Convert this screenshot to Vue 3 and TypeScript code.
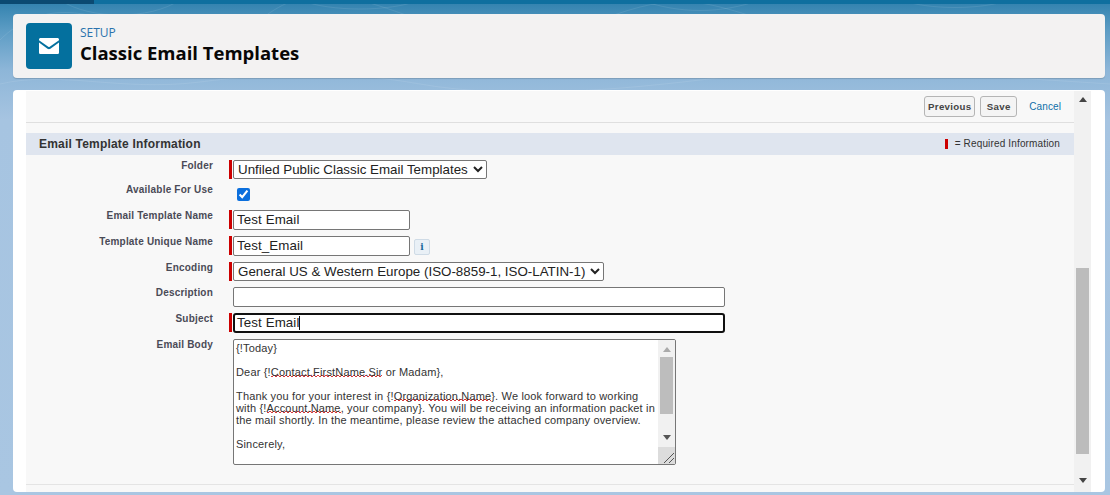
<script setup lang="ts">
const folder = 'Unfiled Public Classic Email Templates'
const encoding = 'General US & Western Europe (ISO-8859-1, ISO-LATIN-1)'
</script>

<template>
  <div class="page">
    <svg class="swirls" width="1110" height="90" viewBox="0 0 1110 90" fill="none" stroke="#ffffff" stroke-opacity=".09">
      <path d="M0 40C40 0 90 10 130 30S210 60 260 20 350-5 420 20 520 50 600 20 700 0 780 25 900 50 1000 15 1110 10" />
      <path d="M60 0C90 20 150 20 180 0M300 0C330 12 390 12 420 0M640 0C680 14 720 14 760 0M900 0C930 10 980 10 1010 0" />
      <path d="M0 84C60 70 120 92 200 82S340 70 420 84 600 92 700 80 900 70 1110 84" />
    </svg>
    <div class="topbar"><div class="topbar-dark"></div></div>

    <header class="head">
      <div class="tile">
        <svg width="20" height="16" viewBox="0 0 20 16">
          <path d="M0 2.2V1.6C0 .7.7 0 1.6 0h16.8C19.3 0 20 .7 20 1.6v.6l-9.3 6.6c-.4.3-1 .3-1.4 0z" fill="#fff" />
          <path d="M0 4.6v9.8c0 .9.7 1.6 1.6 1.6h16.8c.9 0 1.6-.7 1.6-1.6V4.6l-8.6 6.2c-.9.6-2 .6-2.9 0z" fill="#fff" />
        </svg>
      </div>
      <div class="titles">
        <div class="eyebrow">SETUP</div>
        <h1>Classic Email Templates</h1>
      </div>
    </header>

    <main class="card">
      <div class="panel">
        <div class="toolbar">
          <button class="btn prev">Previous</button>
          <button class="btn save">Save</button>
          <a class="cancel">Cancel</a>
        </div>

        <section class="section-head">
          <h2>Email Template Information</h2>
          <span class="legend"><i class="legend-bar"></i>= Required Information</span>
        </section>

        <form class="form" @submit.prevent>
          <div class="row r-folder">
            <label>Folder</label>
            <i class="req"></i>
            <select class="sel w-folder"><option>{{ folder }}</option></select>
          </div>
          <div class="row r-check">
            <label>Available For Use</label>
            <i class="noreq"></i>
            <input class="check" type="checkbox" checked />
          </div>
          <div class="row r-name">
            <label>Email Template Name</label>
            <i class="req"></i>
            <input class="txt w-name" value="Test Email" />
          </div>
          <div class="row r-unique">
            <label>Template Unique Name</label>
            <i class="req"></i>
            <input class="txt w-name" value="Test_Email" />
            <span class="info">i</span>
          </div>
          <div class="row r-enc">
            <label>Encoding</label>
            <i class="req"></i>
            <select class="sel w-enc"><option>{{ encoding }}</option></select>
          </div>
          <div class="row r-desc">
            <label>Description</label>
            <i class="noreq"></i>
            <input class="txt w-wide" />
          </div>
          <div class="row r-subj">
            <label>Subject</label>
            <i class="req"></i>
            <div class="txt w-wide focus">Test Email<span class="caret"></span></div>
          </div>
          <div class="row r-body">
            <label>Email Body</label>
            <i class="noreq"></i>
            <div class="body">
              <div class="body-text">
                <p>{!Today}</p>
                <p>Dear {!<u>Contact.FirstName.Sir</u> or Madam},</p>
                <p>Thank you for your interest in {!<u>Organization.Name</u>}. We look forward to working<br />with {!<u>Account.Name</u>, your company}. You will be receiving an information packet in<br />the mail shortly. In the meantime, please review the attached company overview.</p>
                <p>Sincerely,</p>
              </div>
              <div class="mini-bar">
                <span class="arrow up small"></span>
                <span class="mini-thumb"></span>
                <span class="arrow down small"></span>
                <span class="grip">
                  <svg width="14" height="14" viewBox="0 0 14 14" stroke="#555" fill="none"><path d="M3 13 13 3M8 13l5-5" /></svg>
                </span>
              </div>
            </div>
          </div>
        </form>
        <div class="panel-foot"></div>
      </div>

      <aside class="scroll">
        <span class="arrow up"></span>
        <span class="thumb"></span>
        <span class="arrow down"></span>
      </aside>
    </main>
  </div>
</template>

<style>
html, body { margin: 0; padding: 0; overflow: hidden; background: #a9c6e2; }
</style>

<style scoped>
.page {
  position: relative;
  width: 1110px;
  height: 495px;
  box-sizing: border-box;
  padding: 14px 5px 4px 13px;
  overflow: hidden;
  font-family: "Liberation Sans", Arial, sans-serif;
  background: linear-gradient(180deg, #2f80ad 0, #5c9cc4 30px, #8db6d8 70px, #a6c4e1 120px, #a9c6e2 100%);
}
.swirls { position: absolute; left: 0; top: 0; }
.topbar { position: absolute; left: 0; right: 0; top: 0; height: 4px; background: #0f6f9f; }
.topbar-dark { width: 94px; height: 4px; background: #0b4a72; }

.head {
  position: relative;
  display: flex;
  align-items: center;
  height: 64px;
  box-sizing: border-box;
  padding-left: 13px;
  gap: 8px;
  background: #f3f2f2;
  border-radius: 4px;
  box-shadow: 0 1px 1px rgba(0, 0, 0, .15);
}
.tile {
  width: 46px;
  height: 46px;
  border-radius: 4px;
  background: #04709e;
  display: flex;
  align-items: center;
  justify-content: center;
}
.titles { margin-top: -3px; }
.eyebrow { font: 12px/17px "Open Sans", sans-serif; color: #2a72ad; }
h1 { margin: 0; font: 700 18.5px/24px "Open Sans", sans-serif; color: #080707; }

.card {
  position: relative;
  display: flex;
  height: 401px;
  margin-top: 12px;
  padding: 1px 14px 0 13px;
  background: #fff;
  border-radius: 4px;
}
.panel { width: 1048px; background: #f8f8f8; flex: none; }
.toolbar {
  display: flex;
  align-items: center;
  justify-content: flex-end;
  height: 32px;
  padding: 0 13px 1px 0;
  box-sizing: border-box;
  border-bottom: 1px solid #dfdfdf;
  margin-bottom: 10px;
}
.btn {
  height: 21px;
  padding: 0;
  border: 1px solid #b5b5b5;
  border-radius: 3px;
  background: #f4f4f4;
  font: 700 9.7px "Liberation Sans", sans-serif;
  letter-spacing: .3px;
  color: #444;
}
.prev { width: 51px; }
.save { width: 37px; margin-left: 5px; }
.cancel { margin-left: 12px; font-size: 10px; letter-spacing: .1px; color: #0f6fa8; }

.section-head {
  display: flex;
  align-items: center;
  justify-content: space-between;
  height: 22px;
  padding: 0 14px 1px 13px;
  box-sizing: border-box;
  background: #dfe5ef;
}
h2 { margin: 0; font: 700 12px "Liberation Sans", sans-serif; letter-spacing: .2px; color: #333; }
.legend { display: flex; align-items: center; font-size: 10px; color: #333; letter-spacing: .15px; }
.legend-bar { width: 3px; height: 10px; background: #c00; margin-right: 7px; }

.form { padding-top: 5px; }
.row { display: flex; align-items: flex-start; }
.row label {
  width: 187px;
  flex: none;
  text-align: right;
  font-weight: 700;
  font-size: 10px;
  letter-spacing: .2px;
  line-height: 12px;
  color: #4a4a56;
  margin-right: 16px;
}
.req { width: 3px; height: 19px; background: #c00; flex: none; margin-right: 1px; }
.noreq { width: 3px; flex: none; margin-right: 1px; }
.r-folder { height: 25px; }
.r-check { height: 25px; }
.r-check label { margin-top: -1px; }
.r-name { height: 26px; }
.r-unique { height: 26px; }
.r-enc { height: 25px; }
.r-desc { height: 26px; }
.r-subj { height: 26px; }

.sel {
  height: 19px;
  box-sizing: border-box;
  padding: 0;
  font: 13.33px "Liberation Sans", sans-serif;
  letter-spacing: .01px;
  color: #222;
  background: #fff;
  border: 1px solid #767676;
  border-radius: 2px;
}
.w-folder { width: 254px; }
.w-enc { width: 371px; }
.txt {
  box-sizing: border-box;
  height: 20px;
  padding: 0 3px 2px;
  font: 13.33px/16px "Liberation Sans", sans-serif;
  letter-spacing: .1px;
  color: #222;
  background: #fff;
  border: 1px solid #767676;
  border-radius: 2px;
  outline: none;
}
.w-name { width: 177px; }
.w-wide { width: 492px; }
.focus {
  border: 2px solid #101010;
  border-radius: 3px;
  padding: 0 2px;
  line-height: 16px;
  display: flex;
  align-items: center;
}
.caret { width: 1px; height: 14px; background: #111; }
.check { width: 13px; height: 13px; margin: 3px 0 0 4px; accent-color: #0b6fdd; }
.info {
  width: 14px;
  height: 14px;
  margin: 3px 0 0 4px;
  border: 1px solid #cfdbe6;
  border-radius: 2px;
  background: #e9f0f6;
  font: 700 9px/14px "DejaVu Serif", serif;
  color: #16679c;
  text-align: center;
}

.body {
  position: relative;
  width: 443px;
  height: 126px;
  box-sizing: border-box;
  border: 1px solid #767676;
  border-radius: 2px;
  background: #fff;
  overflow: hidden;
}
.body-text {
  padding: 2px 0 0 2px;
  font-size: 11px;
  line-height: 12px;
  letter-spacing: .165px;
  color: #333;
  white-space: nowrap;
}
.body-text p { margin: 0 0 12px; }
.body-text u {
  text-decoration: none;
  background-image:
    repeating-linear-gradient(90deg, #d9363a 0 2px, transparent 2px 4px),
    repeating-linear-gradient(90deg, transparent 0 2px, #d9363a 2px 4px);
  background-size: 100% 1px;
  background-repeat: no-repeat;
  background-position: 0 calc(100% - 1px), 0 calc(100% - 2px);
}
.mini-bar {
  position: absolute;
  right: 0;
  top: 0;
  bottom: 0;
  width: 17px;
  background: #f1f1f1;
  display: flex;
  flex-direction: column;
  align-items: center;
}
.mini-thumb { width: 13px; height: 57px; margin-top: 5px; background: #bdbdbd; }
.mini-bar .up { margin-top: 7px; }
.mini-bar .down { margin-top: 21px; }
.grip {
  position: absolute;
  left: 0;
  right: 0;
  bottom: 0;
  height: 17px;
  background: #dcdcdc;
  display: flex;
  align-items: flex-end;
  justify-content: flex-end;
}
.panel-foot { margin-top: 19px; border-top: 1px solid #e4e4e4; height: 6px; }

.scroll {
  width: 17px;
  background: #f1f1f1;
  display: flex;
  flex-direction: column;
  align-items: center;
  flex: none;
}
.arrow { width: 0; height: 0; border-left: 4px solid transparent; border-right: 4px solid transparent; flex: none; }
.up { border-bottom: 5px solid #444; }
.down { border-top: 5px solid #444; }
.small.up { border-bottom-color: #aaa; }
.small.down { border-top-color: #555; }
.scroll .up { margin-top: 6px; }
.thumb { width: 13px; height: 186px; margin-top: 166px; background: #bcbcbc; }
.scroll .down { margin-top: 24px; }
</style>
